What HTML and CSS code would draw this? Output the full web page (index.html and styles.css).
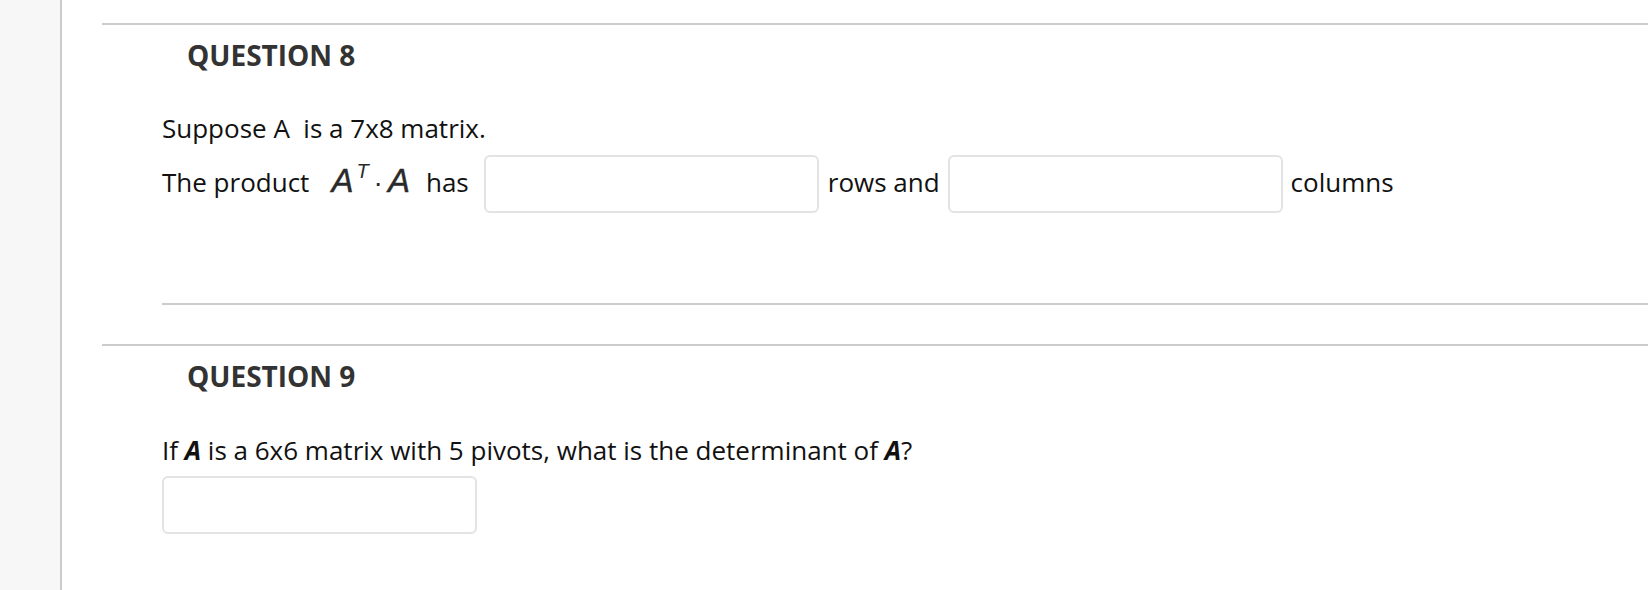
FILE: index.html
```html
<!DOCTYPE html>
<html lang="en">
<head>
<meta charset="utf-8">
<title>Questions</title>
<link rel="stylesheet" href="styles.css">
</head>
<body>
<div class="page">
  <aside class="sidebar"></aside>
  <main class="content">
    <section class="question q8">
      <h2 class="q-title">QUESTION 8</h2>
      <div class="q-body">
        <p class="q-text">Suppose A&nbsp; is a 7x8 matrix.</p>
        <div class="row">
          <span class="txt t-product">The product</span>
          <span class="math"><i class="mv">A</i><sup class="msup">T</sup><span class="mdot">·</span><i class="mv">A</i></span>
          <span class="txt t-has">has</span>
          <input class="answer wide" type="text" aria-label="rows">
          <span class="txt t-rows">rows and</span>
          <input class="answer wide" type="text" aria-label="columns">
          <span class="txt t-cols">columns</span>
        </div>
        <hr class="divider">
      </div>
    </section>
    <section class="question q9">
      <h2 class="q-title">QUESTION 9</h2>
      <div class="q-body">
        <p class="q-text">If <b><i>A</i></b> is a 6x6 matrix with 5 pivots, what is the determinant of <b><i>A</i></b>?</p>
        <input class="answer single" type="text" aria-label="determinant">
      </div>
    </section>
  </main>
</div>
</body>
</html>
```

FILE: styles.css
```css
html, body {
  margin: 0;
  padding: 0;
  background: #ffffff;
}

body {
  font-family: "Open Sans", "Noto Sans", sans-serif;
  color: #111111;
}

.page {
  display: flex;
  min-height: 590px;
}

.sidebar {
  width: 60px;
  flex: 0 0 60px;
  background: #f7f7f7;
  border-right: 2px solid #cccccc;
}

.content {
  flex: 1;
  padding-left: 40px;
  padding-top: 23px;
}

.question {
  border-top: 2px solid #cccccc;
}

.q9 {
  margin-top: 39px;
}

.q-title {
  margin: 10px 0 0 85px;
  font-size: 28px;
  line-height: 40px;
  font-weight: 700;
  color: #333333;
}

.q-body {
  padding-left: 60px;
  padding-top: 35px;
}

.q9 .q-body {
  padding-top: 36px;
}

.q-text {
  margin: 0;
  font-size: 26px;
  line-height: 36px;
}

.row {
  display: flex;
  align-items: center;
  margin-top: 9px;
  height: 58px;
}

.txt {
  font-size: 26px;
  line-height: 36px;
  padding-bottom: 4px;
  white-space: nowrap;
}

.t-product { margin-right: 22px; }
.t-has { margin-left: 16px; margin-right: 15px; }
.t-rows { margin-left: 9px; margin-right: 8px; }
.t-cols { margin-left: 8px; }

.math {
  font-family: "Liberation Sans", Arial, sans-serif;
  font-size: 33px;
  line-height: 36px;
  color: #2a2a2a;
  white-space: nowrap;
  padding-bottom: 4px;
}

.mv {
  font-style: italic;
  -webkit-text-stroke: 0.4px #2a2a2a;
}

.msup {
  font-style: italic;
  font-size: 20px;
  vertical-align: 14px;
  line-height: 0;
  margin-left: 3px;
}

.mdot {
  font-size: 28px;
  margin: 0 5px 0 5px;
}

.answer {
  box-sizing: border-box;
  height: 58px;
  border: 2px solid #e3e3e3;
  border-radius: 6px;
  background: #ffffff;
  padding: 0 10px;
  font-family: "Open Sans", sans-serif;
  font-size: 22px;
  outline: none;
}

.wide {
  width: 335px;
}

.single {
  display: block;
  width: 315px;
  margin-top: 8px;
}

.divider {
  border: 0;
  border-top: 2px solid #cccccc;
  margin: 90px 0 0 0;
  height: 0;
}
```
